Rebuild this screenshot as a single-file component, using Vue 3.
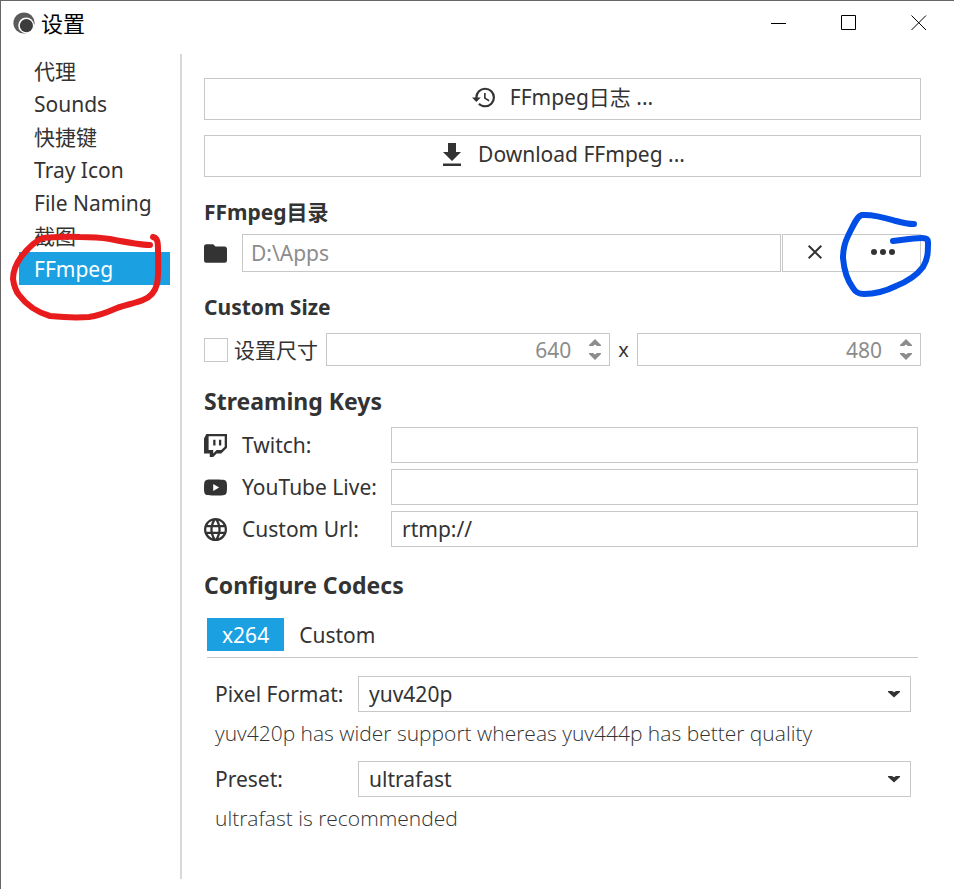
<script setup>
import { ref } from 'vue'

const sections = ['代理', 'Sounds', '快捷键', 'Tray Icon', 'File Naming', '截图', 'FFmpeg']
const active = ref('FFmpeg')

const folder = ref('D:\\Apps')
const customSize = ref(false)
const width = ref(640)
const height = ref(480)

const streams = ref([
  {
    id: 'twitch',
    label: 'Twitch:',
    value: '',
    box: '2 2 20 20',
    path: 'M4 2H22V14L17 19H13L10 22H7V19H2V6ZM20 13V4H6V16H10V19L13 16H17ZM15 7H17V12H15ZM12 7V12H10V7Z'
  },
  {
    id: 'youtube',
    label: 'YouTube Live:',
    value: '',
    box: '2 2 20 20',
    path: 'M10 15L15.2 12L10 9ZM21.6 7.2C21.7 7.6 21.8 8.2 21.9 9C22 9.7 22 10.4 22 11V12C22 14.2 21.8 15.8 21.6 16.8C21.3 17.7 20.7 18.3 19.8 18.6C19.4 18.7 18.5 18.8 17.2 18.9C15.9 19 14.7 19 13.6 19H12C7.8 19 5.2 18.8 4.2 18.6C3.3 18.3 2.7 17.7 2.4 16.8C2.3 16.4 2.2 15.8 2.1 15C2 14.3 2 13.6 2 13V12C2 9.8 2.2 8.2 2.4 7.2C2.7 6.3 3.3 5.7 4.2 5.4C4.6 5.3 5.5 5.2 6.8 5.1C8.1 5 9.3 5 10.4 5H12C16.2 5 18.8 5.2 19.8 5.4C20.7 5.7 21.3 6.3 21.6 7.2Z'
  },
  {
    id: 'custom-url',
    label: 'Custom Url:',
    value: 'rtmp://',
    box: '2 2 20 20',
    path: 'M16.36 14C16.44 13.34 16.5 12.68 16.5 12S16.44 10.66 16.36 10H19.74C19.9 10.64 20 11.31 20 12S19.9 13.36 19.74 14M14.59 19.56C15.19 18.45 15.65 17.25 15.97 16H18.92C17.96 17.65 16.43 18.93 14.59 19.56M14.34 14H9.66C9.56 13.34 9.5 12.68 9.5 12S9.56 10.65 9.66 10H14.34C14.43 10.65 14.5 11.32 14.5 12S14.43 13.34 14.34 14M12 19.96C11.17 18.76 10.5 17.43 10.09 16H13.91C13.5 17.43 12.83 18.76 12 19.96M8 8H5.08C6.03 6.34 7.57 5.06 9.4 4.44C8.8 5.55 8.35 6.75 8 8M5.08 16H8C8.35 17.25 8.8 18.45 9.4 19.56C7.57 18.93 6.03 17.65 5.08 16M4.26 14C4.1 13.36 4 12.69 4 12S4.1 10.64 4.26 10H7.64C7.56 10.66 7.5 11.32 7.5 12S7.56 13.34 7.64 14M12 4.03C12.83 5.23 13.5 6.57 13.91 8H10.09C10.5 6.57 11.17 5.23 12 4.03M18.92 8H15.97C15.65 6.75 15.19 5.55 14.59 4.44C16.43 5.07 17.96 6.34 18.92 8M12 2C6.47 2 2 6.5 2 12A10 10 0 0 0 12 22A10 10 0 0 0 22 12A10 10 0 0 0 12 2Z'
  }
])

const codecs = ['x264', 'Custom']
const codec = ref('x264')
const pixelFormat = ref('yuv420p')
const preset = ref('ultrafast')
</script>

<template>
  <div class="window">
    <header class="titlebar">
      <svg class="app-icon" viewBox="0 0 22 22" aria-hidden="true">
        <circle cx="11" cy="11" r="10.6" fill="#5a5a5a" />
        <circle cx="13.2" cy="13.4" r="8" fill="#fff" />
        <circle cx="13.4" cy="13.6" r="6.6" fill="#3c3c3c" />
      </svg>
      <h1 class="title">设置</h1>
      <div class="caption-buttons">
        <button type="button" class="caption" aria-label="Minimize">
          <svg viewBox="0 0 16 16"><path d="M0 8.5H15" /></svg>
        </button>
        <button type="button" class="caption" aria-label="Maximize">
          <svg viewBox="0 0 16 16"><path d="M.5 .5H14.5V14.5H.5Z" /></svg>
        </button>
        <button type="button" class="caption" aria-label="Close">
          <svg viewBox="0 0 16 16"><path d="M.5 .5L15 15M15 .5L.5 15" /></svg>
        </button>
      </div>
    </header>

    <div class="body">
      <nav class="sidebar">
        <a
          v-for="s in sections"
          :key="s"
          href="#"
          class="nav-item"
          :class="{ active: s === active }"
          @click.prevent="active = s"
        >
          {{ s }}
          <svg v-if="s === 'FFmpeg'" class="mark mark-red" viewBox="0 0 160 92" aria-hidden="true">
            <path d="M145 16C135 16 120 13 105 10C92 8 84 8 75 8C60 7 50 8 38 9C30 12 23 19 16 28C11 35 8 43 8 50C9 57 10 61 14 66C20 74 31 83 45 87C55 88 70 89 84 88C94 87 103 83 112 79C120 76 131 74 138 71C146 68 150 63 152 55C154 45 153 30 153 20C153 12 152 9 148 8" />
          </svg>
        </a>
      </nav>

      <main class="content">
        <div class="actions">
          <button type="button" class="box action">
            <svg class="icon" viewBox="1 2.5 21 19" aria-hidden="true">
              <path d="M13.5 8H12V13L16.28 15.54L17 14.33L13.5 12.25V8M13 3A9 9 0 0 0 4 12H1L4.96 16.03L9 12H6A7 7 0 0 1 13 5A7 7 0 0 1 20 12A7 7 0 0 1 13 19C11.07 19 9.32 18.21 8.06 16.94L6.64 18.36C8.27 20 10.5 21 13 21A9 9 0 0 0 22 12A9 9 0 0 0 13 3" />
            </svg>
            FFmpeg日志 ...
          </button>
          <button type="button" class="box action">
            <svg class="icon" viewBox="0 0 23 23" aria-hidden="true">
              <path d="M8 0H16V9H21L12 18L3 9H8ZM3 20.5H21V23H3Z" />
            </svg>
            Download FFmpeg ...
          </button>
        </div>

        <h2 class="heading folder-heading">FFmpeg目录</h2>
        <div class="folder-row">
          <svg class="icon" viewBox="2 2 20 20" aria-hidden="true">
            <path d="M10 4H4C2.9 4 2 4.9 2 6V18A2 2 0 0 0 4 20H20A2 2 0 0 0 22 18V8C22 6.9 21.1 6 20 6H12Z" />
          </svg>
          <div class="folder-picker">
            <input v-model="folder" class="box field muted" type="text" aria-label="FFmpeg目录" />
            <div class="box folder-buttons">
              <button type="button" class="plain" aria-label="Clear">
                <svg class="cross" viewBox="0 0 14 14"><path d="M.7 .7L13.3 13.3M13.3 .7L.7 13.3" /></svg>
              </button>
              <button type="button" class="plain" aria-label="Browse">
                <svg class="dots" viewBox="0 0 24 6">
                  <circle cx="3" cy="3" r="3" />
                  <circle cx="12" cy="3" r="3" />
                  <circle cx="21" cy="3" r="3" />
                </svg>
              </button>
              <svg class="mark mark-blue" viewBox="0 0 100 92" aria-hidden="true">
                <path d="M78 16C72 16 67 15 60 13C50 10 38 6 26 7C21 8 17 18 12 28C8 36 7 42 7 50C8 62 11 72 17 80C20 85 23 86 28 86C40 86 50 83 60 78C70 74 81 67 87 59C92 51 92 44 92 34C92 31 90 30 86 30C76 30 67 32 57 33" />
              </svg>
            </div>
          </div>
        </div>

        <h2 class="heading">Custom Size</h2>
        <div class="size-row">
          <label class="check">
            <input v-model="customSize" type="checkbox" />
            设置尺寸
          </label>
          <div class="box spinner">
            <input v-model.number="width" class="muted" type="number" aria-label="Width" />
            <div class="spin">
              <button type="button" aria-label="Increase width" @click="width++">
                <svg viewBox="0 0 12 7"><path d="M0 6L6 0L12 6V7H8L6 5.5L4 7H0Z" /></svg>
              </button>
              <button type="button" aria-label="Decrease width" @click="width--">
                <svg viewBox="0 0 12 7"><path d="M0 1L6 7L12 1V0H8L6 1.5L4 0H0Z" /></svg>
              </button>
            </div>
          </div>
          <span class="times">x</span>
          <div class="box spinner">
            <input v-model.number="height" class="muted" type="number" aria-label="Height" />
            <div class="spin">
              <button type="button" aria-label="Increase height" @click="height++">
                <svg viewBox="0 0 12 7"><path d="M0 6L6 0L12 6V7H8L6 5.5L4 7H0Z" /></svg>
              </button>
              <button type="button" aria-label="Decrease height" @click="height--">
                <svg viewBox="0 0 12 7"><path d="M0 1L6 7L12 1V0H8L6 1.5L4 0H0Z" /></svg>
              </button>
            </div>
          </div>
        </div>

        <h2 class="heading large">Streaming Keys</h2>
        <div class="streams">
          <div v-for="s in streams" :key="s.id" class="stream">
            <svg class="icon" :viewBox="s.box" aria-hidden="true"><path fill-rule="evenodd" :d="s.path" /></svg>
            <label :for="s.id">{{ s.label }}</label>
            <input :id="s.id" v-model="s.value" class="box field" type="text" />
          </div>
        </div>

        <h2 class="heading large">Configure Codecs</h2>
        <div class="codecs">
          <div class="tabs" role="tablist">
            <button
              v-for="c in codecs"
              :key="c"
              type="button"
              role="tab"
              class="tab"
              :class="{ active: c === codec }"
              :aria-selected="c === codec"
              @click="codec = c"
            >{{ c }}</button>
          </div>
          <div class="panel">
            <div class="option">
              <label for="pixel-format">Pixel Format:</label>
              <div class="select">
                <select id="pixel-format" v-model="pixelFormat" class="box field">
                  <option>yuv420p</option>
                  <option>yuv444p</option>
                </select>
                <svg class="arrow" viewBox="0 0 12 7" aria-hidden="true"><path d="M0 0H4L6 1.2L8 0H12V1L6 6.5L0 1Z" /></svg>
              </div>
            </div>
            <p class="note">yuv420p has wider support whereas yuv444p has better quality</p>
            <div class="option">
              <label for="preset">Preset:</label>
              <div class="select">
                <select id="preset" v-model="preset" class="box field">
                  <option>ultrafast</option>
                  <option>medium</option>
                  <option>slow</option>
                </select>
                <svg class="arrow" viewBox="0 0 12 7" aria-hidden="true"><path d="M0 0H4L6 1.2L8 0H12V1L6 6.5L0 1Z" /></svg>
              </div>
            </div>
            <p class="note">ultrafast is recommended</p>
          </div>
        </div>
      </main>
    </div>
  </div>
</template>

<style>
body {
  margin: 0;
  background: #fff;
}
</style>

<style scoped>
.window,
.window * {
  box-sizing: border-box;
}

.window {
  display: flex;
  flex-direction: column;
  min-height: 100vh;
  border-top: 1px solid #666;
  border-left: 1px solid #666;
  background: #fff;
  color: #333;
  font: 21px/28px 'Noto Sans', 'Noto Sans CJK SC', sans-serif;
}

button,
input,
select {
  margin: 0;
  padding: 0;
  border: 0;
  border-radius: 0;
  background: transparent;
  color: inherit;
  font: inherit;
  outline: none;
}

svg {
  display: block;
  overflow: visible;
}

.titlebar {
  display: flex;
  align-items: center;
  height: 44px;
  padding-left: 12px;
  gap: 6px;
}

.app-icon {
  width: 22px;
  height: 22px;
}

.title {
  flex: 1;
  margin: 0;
  color: #000;
  font-size: 22px;
  font-weight: 400;
}

.caption-buttons {
  display: flex;
}

.caption {
  display: flex;
  align-items: center;
  justify-content: center;
  width: 70px;
  height: 44px;
}

.caption svg {
  width: 16px;
  height: 16px;
  fill: none;
  stroke: #000;
}

.body {
  display: flex;
  flex: 1;
  padding: 9px 0 10px;
}

.sidebar {
  flex: none;
  width: 181px;
  padding: 0 10px 0 18px;
  border-right: 2px solid #d8d8d8;
}

.nav-item {
  position: relative;
  display: flex;
  align-items: center;
  height: 33px;
  padding-left: 15px;
  color: inherit;
  text-decoration: none;
  white-space: nowrap;
}

.active {
  background: #1ba1e2;
  color: #fff;
}

.mark {
  position: absolute;
  z-index: 1;
  fill: none;
  stroke-width: 6;
  stroke-linecap: round;
  stroke-linejoin: round;
  pointer-events: none;
}

.mark-red {
  top: -23px;
  left: -14px;
  width: 160px;
  height: 92px;
  stroke: #e81c1c;
}

.mark-blue {
  top: -27px;
  right: -16px;
  width: 100px;
  height: 92px;
  stroke: #004ee6;
}

.content {
  flex: 1;
  min-width: 0;
  padding: 24px 33px 0 22px;
}

.box {
  border: 1px solid #c8c8c8;
}

.icon {
  flex: none;
  width: 23px;
  height: 23px;
  fill: #333;
}

.actions {
  display: grid;
  gap: 15px;
}

.action {
  display: flex;
  align-items: center;
  justify-content: center;
  gap: 15px;
  height: 42px;
  padding-bottom: 4px;
}

.heading {
  margin: 21px 0 12px;
  font-size: 21px;
  font-weight: 700;
  line-height: 28px;
}

.folder-heading {
  margin-bottom: 8px;
}

.large {
  font-size: 23px;
}

.folder-row {
  display: flex;
  align-items: center;
  gap: 15px;
}

.field {
  width: 100%;
  min-width: 0;
  height: 36px;
  padding: 0 10px;
}

.folder-picker {
  display: flex;
  flex: 1;
  gap: 1px;
  min-width: 0;
}

.folder-picker .field {
  flex: 1;
  height: 38px;
  padding: 0 8px;
}

.muted {
  color: #8c8c8c;
}

.folder-buttons {
  position: relative;
  display: grid;
  grid-template-columns: 63px 1fr;
  width: 139px;
  height: 38px;
  padding-bottom: 3px;
}

.plain {
  display: flex;
  align-items: center;
  justify-content: center;
}

.cross {
  width: 14px;
  height: 14px;
  stroke: #333;
  stroke-width: 2;
}

.dots {
  width: 24px;
  height: 6px;
  fill: #333;
}

.size-row {
  display: flex;
  align-items: center;
  gap: 8px;
}

.check {
  display: flex;
  align-items: center;
  gap: 6px;
  white-space: nowrap;
}

.check input {
  appearance: none;
  width: 24px;
  height: 24px;
  border: 1px solid #c8c8c8;
}

.check input:checked {
  background: #1ba1e2;
}

.spinner {
  display: flex;
  flex: 1;
  min-width: 0;
  height: 33px;
}

.spinner input {
  flex: 1;
  min-width: 0;
  text-align: right;
  appearance: textfield;
}

.spinner input::-webkit-inner-spin-button {
  appearance: none;
}

.spin {
  display: flex;
  flex-direction: column;
  justify-content: center;
  gap: 7px;
  padding: 0 8px 0 18px;
}

.spin svg {
  width: 12px;
  height: 7px;
  fill: #8c8c8c;
}

.times {
  font-size: 20px;
}

.streams {
  display: grid;
  gap: 6px;
  padding-bottom: 3px;
}

.stream {
  display: grid;
  grid-template-columns: 23px 134px 1fr;
  align-items: center;
  column-gap: 15px;
  padding-right: 3px;
}

.stream label {
  white-space: nowrap;
}

.codecs {
  padding: 7px 3px 0;
}

.tabs {
  display: flex;
  padding-bottom: 6px;
  border-bottom: 1px solid #c8c8c8;
}

.tab {
  height: 33px;
  padding: 0 15px;
}

.panel {
  padding: 18px 7px 0 8px;
}

.option {
  display: grid;
  grid-template-columns: 143px 1fr;
  align-items: center;
  white-space: nowrap;
}

.select {
  display: grid;
  align-items: center;
}

.select select,
.arrow {
  grid-area: 1 / 1;
}

.select select {
  appearance: none;
}

.arrow {
  justify-self: end;
  width: 12px;
  height: 7px;
  margin-right: 11px;
  fill: #333;
  pointer-events: none;
}

.note {
  margin: 7px 0 14px;
  font-family: 'Open Sans', 'Noto Sans', sans-serif;
  font-weight: 300;
}
</style>
